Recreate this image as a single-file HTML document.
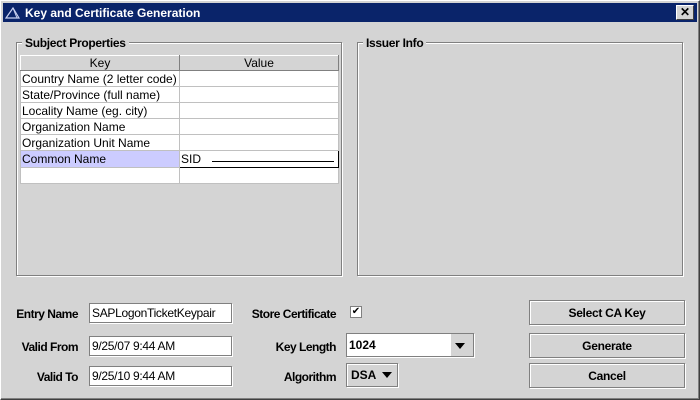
<!DOCTYPE html>
<html><head><style>
*{margin:0;padding:0;box-sizing:border-box}
body{width:700px;height:400px;background:#d4d4d4;position:relative;overflow:hidden;font-family:"Liberation Sans",sans-serif;font-size:12px;color:#000}
.win{position:absolute;left:0;top:0;width:700px;height:400px;border:1px solid #fff;border-right-color:#404040;border-bottom-color:#404040;box-shadow:inset -1px -1px #808080}
.abs{position:absolute}
.title{left:3px;top:3px;width:694px;height:19px;background:#0a246a;color:#fff;font-weight:bold;font-size:12px;line-height:20px;padding-left:22px}
.close{left:676px;top:5px;width:18px;height:15px;background:#d4d4d4;border:1px solid #fff;border-right-color:#404040;border-bottom-color:#404040;color:#000;font-size:12px;line-height:12px;text-align:center;font-weight:bold}
.grp{border:1px solid #808080;box-shadow:1px 1px #fff, inset 1px 1px #fff}
.lg{background:#d4d4d4;font-weight:bold;padding:0 3px;font-size:12px;letter-spacing:-0.3px}
table{border-collapse:collapse;position:absolute;left:20px;top:55px;width:319px;background:#fff}
td{border:1px solid #c0c0c0;height:16px;padding:0 1px;font-size:12px;line-height:14px;white-space:nowrap;overflow:hidden}
th{background:#d4d4d4;font-weight:normal;height:15px;border:1px solid #808080;border-top-color:#fff;border-left-color:#fff;font-size:12px}
.lab{font-weight:bold;font-size:12px;letter-spacing:-0.5px;text-align:right}
.fld{background:#fff;border:1px solid #808080;box-shadow:1px 1px #fff;padding-left:2px;font-size:12px;line-height:18px;letter-spacing:-0.3px}
.btn{left:529px;width:156px;border:1px solid #808080;box-shadow:inset 1px 1px #fff,1px 1px #fff;text-align:center;font-weight:bold;letter-spacing:-0.3px}
.arrow{width:0;height:0;border-left:5px solid transparent;border-right:5px solid transparent;border-top:6px solid #000}
</style></head><body>
<div class="win"></div>
<div class="abs title">Key and Certificate Generation</div>
<svg class="abs" style="left:5px;top:5px" width="16" height="15"><path d="M1 13 L8 3 L14 13 Z" fill="none" stroke="#c8d0f0" stroke-width="1.2"/><path d="M8 3 L12 13" stroke="#c8d0f0"/></svg>
<div class="abs close">✕</div>

<div class="abs grp" style="left:16px;top:42px;width:326px;height:234px"></div>
<div class="abs lg" style="left:22px;top:36px">Subject Properties</div>
<table>
<tr><th style="width:159px">Key</th><th>Value</th></tr>
<tr><td>Country Name (2 letter code)</td><td></td></tr>
<tr><td>State/Province (full name)</td><td></td></tr>
<tr><td>Locality Name (eg. city)</td><td></td></tr>
<tr><td>Organization Name</td><td></td></tr>
<tr><td>Organization Unit Name</td><td></td></tr>
<tr><td style="background:#ccccff">Common Name</td><td style="border:1px solid #000;position:relative;line-height:16px">SID<span style="position:absolute;left:32px;top:10px;width:122px;border-top:1px solid #000"></span></td></tr>
<tr><td></td><td></td></tr>
</table>

<div class="abs grp" style="left:357px;top:42px;width:326px;height:234px"></div>
<div class="abs lg" style="left:363px;top:36px">Issuer Info</div>

<div class="abs lab" style="left:0;width:78px;top:307px">Entry Name</div>
<div class="abs lab" style="left:0;width:78px;top:340px">Valid From</div>
<div class="abs lab" style="left:0;width:78px;top:370px">Valid To</div>
<div class="abs fld" style="left:89px;top:303px;width:143px;height:20px">SAPLogonTicketKeypair</div>
<div class="abs fld" style="left:89px;top:336px;width:143px;height:20px">9/25/07 9:44 AM</div>
<div class="abs fld" style="left:89px;top:366px;width:143px;height:20px">9/25/10 9:44 AM</div>

<div class="abs lab" style="left:230px;width:106px;top:307px">Store Certificate</div>
<div class="abs lab" style="left:230px;width:106px;top:340px">Key Length</div>
<div class="abs lab" style="left:230px;width:106px;top:370px">Algorithm</div>
<div class="abs" style="left:350px;top:306px;width:12px;height:12px;background:#fff;border:1px solid #808080;font-size:10px;line-height:10px;text-align:center">✔</div>
<div class="abs" style="left:346px;top:333px;width:128px;height:24px;border:1px solid #808080;box-shadow:1px 1px #fff;background:#d4d4d4">
<div class="abs" style="left:0;top:0;width:104px;height:22px;background:#fff;font-weight:bold;line-height:23px;padding-left:2px">1024</div>
<div class="abs arrow" style="left:108px;top:9px"></div></div>
<div class="abs" style="left:346px;top:363px;width:52px;height:24px;border:1px solid #808080;box-shadow:inset 1px 1px #fff,1px 1px #fff;font-weight:bold;line-height:23px;padding-left:4px">DSA<div class="abs arrow" style="left:35px;top:8px"></div></div>

<div class="abs btn" style="top:300px;height:25px;line-height:25px">Select CA Key</div>
<div class="abs btn" style="top:333px;height:25px;line-height:25px">Generate</div>
<div class="abs btn" style="top:363px;height:25px;line-height:25px">Cancel</div>
</body></html>
